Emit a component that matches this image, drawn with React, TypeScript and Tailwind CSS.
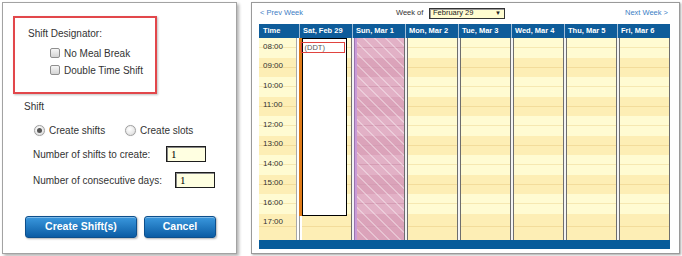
import React from "react";

const hours = ["08:00", "09:00", "10:00", "11:00", "12:00", "13:00", "14:00", "15:00", "16:00", "17:00"];

function Bands({ kind, labels = false }: { kind: "y" | "p"; labels?: boolean }) {
  return (
    <div className="flex flex-col">
      {hours.map((h, i) => {
        const dark = i % 2 === 1;
        const last = i === hours.length - 1;
        let bg: string;
        let line: string;
        if (kind === "p") {
          bg = dark ? "bg-[#dba3ba]" : "bg-[#e2b1c6]";
          line = "border-[#d59db4]";
        } else {
          bg = dark ? "bg-[#fdeeb5]" : "bg-[#fffbd2]";
          line = dark ? "border-[#f3dc9b]" : "border-[#f6e8b1]";
        }
        return (
          <div key={h} className={`${last ? "h-[26.5px]" : "h-[19.5px]"} ${bg} flex flex-col`}>
            <div className={`flex-1 min-h-0 border-b ${line}`}>
              {labels && (
                <div className="pl-[4px] pt-[3.5px] leading-[10px] text-[8px] text-[#333]">{h}</div>
              )}
            </div>
            <div className="flex-1 min-h-0" />
          </div>
        );
      })}
    </div>
  );
}

function Checkbox() {
  return (
    <span className="block w-[10px] h-[10px] rounded-[2px] border border-[#8f8f8f] bg-[linear-gradient(#f6f6f6,#d4d4d4)]" />
  );
}

function Radio({ on }: { on?: boolean }) {
  return (
    <span className="flex w-[11px] h-[11px] rounded-full border border-[#a0a0a0] bg-[radial-gradient(circle_at_40%_35%,#ffffff,#d9d9d9)] items-center justify-center shadow-[0_0_1px_rgba(0,0,0,0.2)]">
      {on && <span className="block w-[5px] h-[5px] rounded-full bg-[#555]" />}
    </span>
  );
}

function DayCol({ children }: { children?: React.ReactNode }) {
  return (
    <div className="flex w-[53px]">
      <div className="w-[2px] bg-[#f4f4f4]" />
      <div className="w-px bg-[#6e6e6e]" />
      <div className="flex-1">{children ?? <Bands kind="y" />}</div>
      <div className="w-px bg-[#6e6e6e]" />
    </div>
  );
}

const days = ["Sat, Feb 29", "Sun, Mar 1", "Mon, Mar 2", "Tue, Mar 3", "Wed, Mar 4", "Thu, Mar 5", "Fri, Mar 6"];

export default function App() {
  return (
    <div className="w-[682px] h-[256px] bg-white flex gap-[14px] pl-[2px] pt-[2px] font-['Liberation_Sans',Arial,sans-serif]">
      {/* Left dialog */}
      <div className="w-[235px] h-[252px] border border-[#a3a3a3] bg-white shadow-[2px_2px_3px_rgba(0,0,0,0.3)] flex flex-col text-[10px] text-[#333]">
        <div className="ml-[10px] mt-[13px] w-[144px] h-[78px] border-2 border-[#e2474b] shadow-[1px_1px_2px_rgba(0,0,0,0.25)] pl-[13px] pt-[10px]">
          <div className="leading-[12px]">Shift Designator:</div>
          <div className="ml-[22px] mt-[6px] flex items-center h-[14px] gap-[4px]">
            <Checkbox />
            <span>No Meal Break</span>
          </div>
          <div className="ml-[22px] mt-[3px] flex items-center h-[14px] gap-[4px]">
            <Checkbox />
            <span>Double Time Shift</span>
          </div>
        </div>
        <div className="ml-[21px] mt-[7px] leading-[12px]">Shift</div>
        <div className="ml-[31px] mt-[10px] h-[14px] flex items-center">
          <div className="w-[91px] flex items-center gap-[4px]">
            <Radio on />
            <span>Create shifts</span>
          </div>
          <div className="flex items-center gap-[4px]">
            <Radio />
            <span>Create slots</span>
          </div>
        </div>
        <div className="ml-[30px] mt-[9px] h-[16px] flex items-center">
          <span className="w-[133px]">Number of shifts to create:</span>
          <span className="w-[40px] h-[16px] border border-[#1e1e1e] bg-[#ffffe1] shadow-[inset_1px_1px_0_#888] pl-[4px] font-['Liberation_Serif',serif] text-[11px] leading-[14px] text-black">1</span>
        </div>
        <div className="ml-[30px] mt-[10px] h-[16px] flex items-center">
          <span className="w-[142px]">Number of consecutive days:</span>
          <span className="w-[40px] h-[16px] border border-[#1e1e1e] bg-[#ffffe1] shadow-[inset_1px_1px_0_#888] pl-[4px] font-['Liberation_Serif',serif] text-[11px] leading-[14px] text-black">1</span>
        </div>
        <div className="ml-[22px] mt-[28px] flex gap-[7px]">
          <button className="w-[112px] h-[22px] rounded-[3px] border border-[#0d4f8c] bg-[linear-gradient(#3a98de,#0b5ca4)] shadow-[inset_0_1px_0_rgba(255,255,255,0.35),1px_1px_2px_rgba(0,0,0,0.3)] text-white font-bold text-[10.5px]">
            Create Shift(s)
          </button>
          <button className="w-[72px] h-[22px] rounded-[3px] border border-[#0d4f8c] bg-[linear-gradient(#3a98de,#0b5ca4)] shadow-[inset_0_1px_0_rgba(255,255,255,0.35),1px_1px_2px_rgba(0,0,0,0.3)] text-white font-bold text-[10.5px]">
            Cancel
          </button>
        </div>
      </div>

      {/* Right calendar */}
      <div className="w-[429px] h-[252px] border border-[#9a9a9a] bg-white shadow-[1px_1px_2px_rgba(0,0,0,0.35)] flex flex-col">
        <div className="h-[20px] flex items-center text-[7.5px] pl-[8px] pr-[11px]">
          <span className="w-[136px] text-[#3d80c5]">&lt; Prev Week</span>
          <span className="w-[33px] text-[#333]">Week of</span>
          <span className="w-[76px] h-[11px] border border-[#333] bg-[#fffcd0] shadow-[inset_1px_1px_0_#999] flex items-center justify-between pl-[3px] pr-[3px] text-[#222]">
            <span>February 29</span>
            <span className="text-[6px]">▼</span>
          </span>
          <span className="ml-auto text-[#3d80c5]">Next Week &gt;</span>
        </div>
        <div className="ml-[7px] mt-[1px] w-[411px] flex flex-col">
          <div className="h-[14px] bg-[#0e5c9a] flex text-white font-bold text-[7.5px]">
            <div className="w-[40px] pl-[4px] flex items-center">Time</div>
            {days.map((d) => (
              <div key={d} className="w-[53px] border-l border-[#9fbcd6] pl-[3px] flex items-center">
                {d}
              </div>
            ))}
          </div>
          <div className="h-[202px] flex">
            {/* time column */}
            <div className="flex w-[40px]">
              <div className="w-[37px]">
                <Bands kind="y" labels />
              </div>
              <div className="w-px bg-[#a8a8a8]" />
              <div className="w-[2px] bg-white" />
            </div>
            {/* Sat */}
            <div className="flex w-[53px]">
              <div className="w-[3px] flex flex-col">
                <div className="h-[178px] bg-[#df7b19]" />
                <div className="flex-1 bg-white border-l border-[#9a9a9a]" />
              </div>
              <div className="relative flex-1">
                <Bands kind="y" />
                <div className="absolute left-0 top-0 w-[45px] h-[178px] bg-white border border-black" />
                <div className="absolute left-[-1px] top-[4px] w-[44px] h-[11px] border-[1.5px] border-[#e0443f] flex items-center pl-[2.5px] text-[7.5px] text-[#555]">
                  (DDT)
                </div>
              </div>
              <div className="w-px bg-[#6e6e6e]" />
            </div>
            {/* Sun */}
            <div className="flex w-[53px]">
              <div className="w-[2px] bg-[#f4f4f4]" />
              <div className="w-[3px] bg-[#c99bd8] border-l border-[#9a74ad]" />
              <div className="relative flex-1">
                <Bands kind="p" />
                <div className="absolute inset-0 bg-[repeating-linear-gradient(45deg,transparent_0px,transparent_6.5px,rgba(255,255,255,0.35)_6.5px,rgba(255,255,255,0.35)_7.8px)]" />
              </div>
              <div className="w-px bg-[#6e6e6e]" />
            </div>
            <DayCol />
            <DayCol />
            <DayCol />
            <DayCol />
            <DayCol />
          </div>
          <div className="h-[9px] bg-[#075b9a]" />
        </div>
      </div>
    </div>
  );
}
